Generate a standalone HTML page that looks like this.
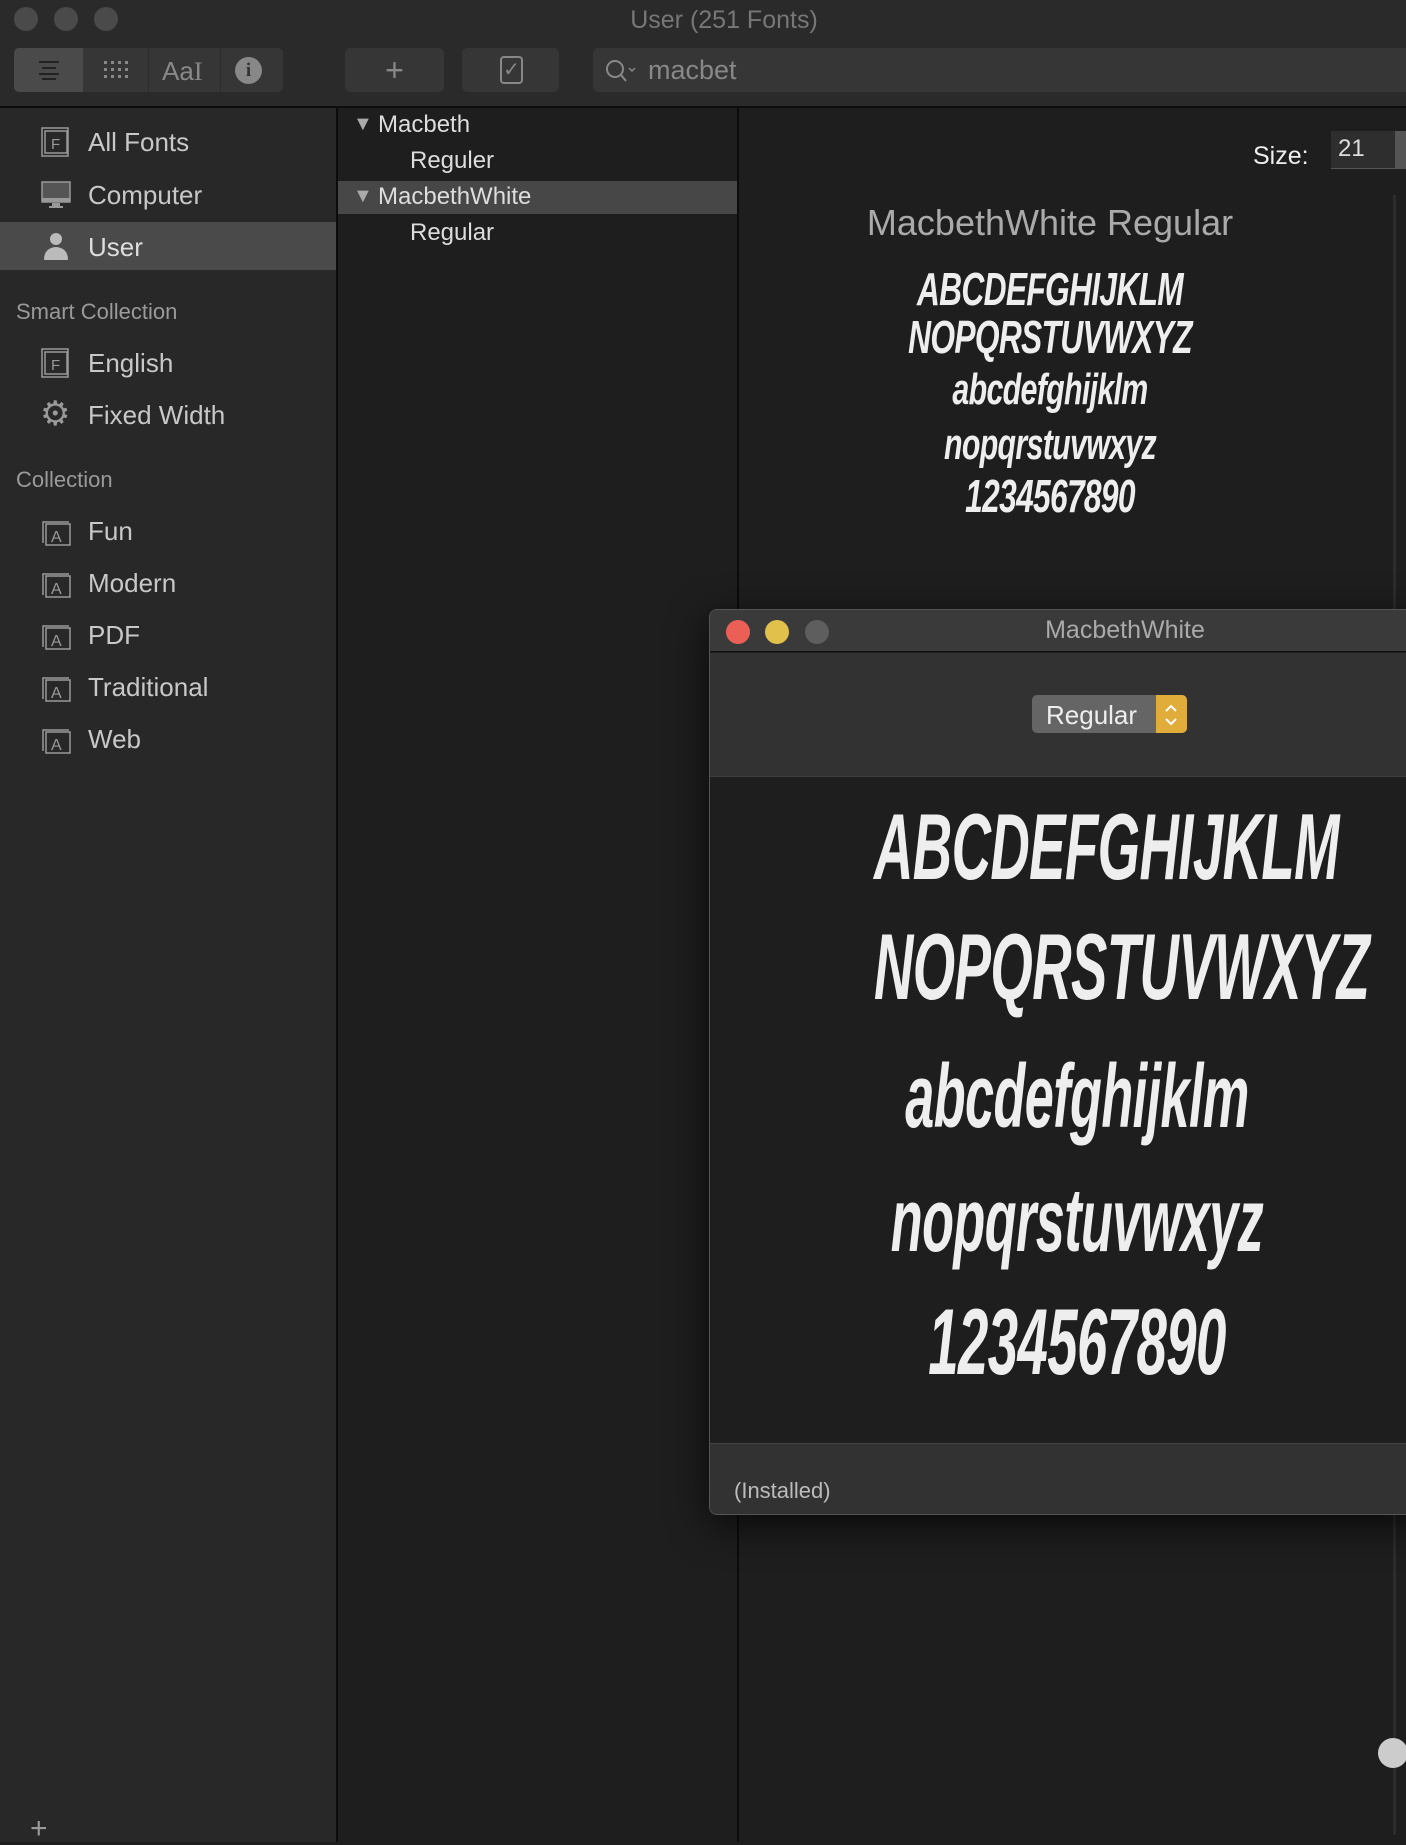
<!DOCTYPE html>
<html><head><meta charset="utf-8"><style>
*{margin:0;padding:0;box-sizing:border-box}
body{width:1406px;height:1842px;background:#1e1e1e;font-family:"Liberation Sans",sans-serif;position:relative;overflow:hidden}
.a{position:absolute}
.t{position:absolute;white-space:nowrap;line-height:1}
.side{left:0;top:108px;width:336px;height:1734px;background:#282828}
.si{font-size:26px;color:#c8c8c8;left:88px}
.hd{font-size:22px;color:#9a9a9a;left:16px}
.ic{position:absolute;left:40px;width:32px;height:32px}
.sample{position:absolute;color:#eee;font-family:"Liberation Sans Narrow","Liberation Sans",sans-serif;font-style:italic;font-weight:bold;white-space:nowrap;text-align:center;transform-origin:center;letter-spacing:-1px}
</style></head><body>
<div class="a" style="left:0;top:0;width:1406px;height:107px;background:#2a2a2a"></div>
<div class="a" style="left:0;top:106px;width:1406px;height:2px;background:#0c0c0c"></div>
<div class="a" style="left:14px;top:7px;width:24px;height:24px;border-radius:50%;background:#4a4a4a"></div>
<div class="a" style="left:54px;top:7px;width:24px;height:24px;border-radius:50%;background:#4a4a4a"></div>
<div class="a" style="left:94px;top:7px;width:24px;height:24px;border-radius:50%;background:#4a4a4a"></div>
<div class="t" style="left:0;width:1448px;text-align:center;top:8px;font-size:25px;color:#777">User (251 Fonts)</div>
<div class="a" style="left:14px;top:48px;width:269px;height:44px;background:#363636;border-radius:5px"></div>
<div class="a" style="left:14px;top:48px;width:69px;height:44px;background:#4a4a4a;border-radius:5px 0 0 5px"></div>
<div class="a" style="left:148px;top:48px;width:1px;height:44px;background:#2c2c2c"></div>
<div class="a" style="left:220px;top:48px;width:1px;height:44px;background:#2c2c2c"></div>
<svg class="a" style="left:37px;top:58px" width="24" height="24"><g stroke="#222" stroke-width="2"><line x1="2" y1="4" x2="22" y2="4"/><line x1="5" y1="10" x2="19" y2="10"/><line x1="2" y1="16" x2="22" y2="16"/><line x1="5" y1="21" x2="19" y2="21"/></g></svg>
<svg class="a" style="left:103px;top:60px" width="26" height="20"><g fill="#888"><rect x="1" y="1" width="3" height="3"/><rect x="8" y="1" width="3" height="3"/><rect x="15" y="1" width="3" height="3"/><rect x="22" y="1" width="3" height="3"/><rect x="1" y="8" width="3" height="3"/><rect x="8" y="8" width="3" height="3"/><rect x="15" y="8" width="3" height="3"/><rect x="22" y="8" width="3" height="3"/><rect x="1" y="15" width="3" height="3"/><rect x="8" y="15" width="3" height="3"/><rect x="15" y="15" width="3" height="3"/><rect x="22" y="15" width="3" height="3"/></g></svg>
<div class="t" style="left:162px;top:58px;font-size:26px;color:#888">Aa<span style="font-family:'Liberation Serif',serif">I</span></div>
<div class="a" style="left:235px;top:57px;width:27px;height:27px;border-radius:50%;background:#888;color:#333;font:bold 19px 'Liberation Serif',serif;text-align:center;line-height:27px">i</div>
<div class="a" style="left:345px;top:48px;width:99px;height:44px;background:#363636;border-radius:5px"></div>
<div class="t" style="left:345px;width:99px;text-align:center;top:54px;font-size:32px;color:#888">+</div>
<div class="a" style="left:462px;top:48px;width:97px;height:44px;background:#363636;border-radius:5px"></div>
<div class="a" style="left:500px;top:56px;width:23px;height:28px;border:2px solid #888;border-radius:4px;color:#888;font-size:20px;text-align:center;line-height:24px">✓</div>
<div class="a" style="left:593px;top:48px;width:830px;height:44px;background:#363636;border-radius:5px"></div>
<svg class="a" style="left:605px;top:59px" width="36" height="24"><circle cx="10" cy="10" r="8" stroke="#888" stroke-width="2" fill="none"/><line x1="16" y1="16" x2="21" y2="22" stroke="#888" stroke-width="2"/><path d="M24 9l3 3 3-3" stroke="#888" stroke-width="1.5" fill="none"/></svg>
<div class="t" style="left:648px;top:57px;font-size:27px;color:#888">macbet</div>
<div class="a side"></div>
<div class="a" style="left:336px;top:108px;width:2px;height:1734px;background:#0c0c0c"></div>
<div class="a" style="left:737px;top:108px;width:2px;height:1734px;background:#0c0c0c"></div>
<div class="a" style="left:0;top:222px;width:336px;height:48px;background:#4a4a4a"></div>
<svg class="ic" style="top:126px"><rect x="2" y="2" width="26" height="28" fill="none" stroke="#999" stroke-width="1.5"/><rect x="5" y="5" width="22" height="22" fill="none" stroke="#999" stroke-width="1.5"/><text x="11" y="23" font-size="15" fill="#999" font-family="Liberation Sans">F</text></svg>
<div class="t si" style="top:129px">All Fonts</div>
<svg class="ic" style="top:180px"><rect x="2" y="2" width="28" height="20" fill="#555" stroke="#999" stroke-width="1.5"/><rect x="2" y="18" width="28" height="4" fill="#999"/><rect x="12" y="23" width="8" height="3" fill="#999"/><rect x="9" y="26" width="14" height="2" fill="#999"/></svg>
<div class="t si" style="top:182px">Computer</div>
<svg class="ic" style="top:230px"><circle cx="16" cy="9" r="6" fill="#bbb"/><path d="M4 30 Q4 18 16 17 Q28 18 28 30Z" fill="#bbb"/></svg>
<div class="t si" style="top:234px;color:#ddd">User</div>
<div class="t hd" style="top:301px">Smart Collection</div>
<svg class="ic" style="top:347px"><rect x="2" y="2" width="26" height="28" fill="none" stroke="#999" stroke-width="1.5"/><rect x="5" y="5" width="22" height="22" fill="none" stroke="#999" stroke-width="1.5"/><text x="11" y="23" font-size="15" fill="#999" font-family="Liberation Sans">F</text></svg>
<div class="t si" style="top:350px">English</div>
<div class="t" style="left:40px;top:397px;font-size:34px;color:#999">⚙</div>
<div class="t si" style="top:402px">Fixed Width</div>
<div class="t hd" style="top:469px">Collection</div>
<div class="t si" style="top:518px">Fun</div>
<div class="t si" style="top:570px">Modern</div>
<div class="t si" style="top:622px">PDF</div>
<div class="t si" style="top:674px">Traditional</div>
<div class="t si" style="top:726px">Web</div>
<svg class="ic" style="top:515px"><path d="M3 28V7h26" fill="none" stroke="#999" stroke-width="1.5"/><rect x="6" y="9" width="24" height="21" fill="none" stroke="#999" stroke-width="1.5"/><text x="11" y="27" font-size="16" fill="#999" font-family="Liberation Sans">A</text></svg>
<svg class="ic" style="top:567px"><path d="M3 28V7h26" fill="none" stroke="#999" stroke-width="1.5"/><rect x="6" y="9" width="24" height="21" fill="none" stroke="#999" stroke-width="1.5"/><text x="11" y="27" font-size="16" fill="#999" font-family="Liberation Sans">A</text></svg>
<svg class="ic" style="top:619px"><path d="M3 28V7h26" fill="none" stroke="#999" stroke-width="1.5"/><rect x="6" y="9" width="24" height="21" fill="none" stroke="#999" stroke-width="1.5"/><text x="11" y="27" font-size="16" fill="#999" font-family="Liberation Sans">A</text></svg>
<svg class="ic" style="top:671px"><path d="M3 28V7h26" fill="none" stroke="#999" stroke-width="1.5"/><rect x="6" y="9" width="24" height="21" fill="none" stroke="#999" stroke-width="1.5"/><text x="11" y="27" font-size="16" fill="#999" font-family="Liberation Sans">A</text></svg>
<svg class="ic" style="top:723px"><path d="M3 28V7h26" fill="none" stroke="#999" stroke-width="1.5"/><rect x="6" y="9" width="24" height="21" fill="none" stroke="#999" stroke-width="1.5"/><text x="11" y="27" font-size="16" fill="#999" font-family="Liberation Sans">A</text></svg>
<div class="t" style="left:30px;top:1814px;font-size:30px;color:#999">+</div>
<div class="a" style="left:338px;top:181px;width:399px;height:33px;background:#474747"></div>
<div class="t" style="left:353px;top:114px;font-size:20px;color:#aaa">▼</div>
<div class="t" style="left:378px;top:113px;font-size:24px;color:#ddd">Macbeth</div>
<div class="t" style="left:410px;top:149px;font-size:24px;color:#ddd">Reguler</div>
<div class="t" style="left:353px;top:186px;font-size:20px;color:#aaa">▼</div>
<div class="t" style="left:378px;top:185px;font-size:24px;color:#ddd">MacbethWhite</div>
<div class="t" style="left:410px;top:221px;font-size:24px;color:#ddd">Regular</div>
<div class="t" style="left:1253px;top:144px;font-size:25px;color:#eee">Size:</div>
<div class="a" style="left:1331px;top:131px;width:80px;height:38px;background:#2e2e2e;border-bottom:1px solid #555"></div>
<div class="t" style="left:1338px;top:137px;font-size:24px;color:#ddd">21</div>
<div class="a" style="left:1395px;top:131px;width:11px;height:38px;background:#555"></div>
<div class="a" style="left:1393px;top:195px;width:3px;height:1640px;background:#2c2c2c"></div>
<div class="t" style="left:740px;width:620px;text-align:center;top:205px;font-size:36px;color:#aaa">MacbethWhite Regular</div>
<div class="sample" style="left:800px;width:500px;top:262px;font-size:46px;transform:scaleX(.69)">ABCDEFGHIJKLM</div>
<div class="sample" style="left:800px;width:500px;top:310px;font-size:46px;transform:scaleX(.69)">NOPQRSTUVWXYZ</div>
<div class="sample" style="left:800px;width:500px;top:365px;font-size:44px;transform:scaleX(.69)">abcdefghijklm</div>
<div class="sample" style="left:800px;width:500px;top:420px;font-size:44px;transform:scaleX(.69)">nopqrstuvwxyz</div>
<div class="sample" style="left:800px;width:500px;top:469px;font-size:46px;transform:scaleX(.69)">1234567890</div>
<div class="a" style="left:1378px;top:1738px;width:30px;height:30px;border-radius:50%;background:#ccc"></div>
<div class="a" style="left:709px;top:609px;width:720px;height:906px;background:#1e1e1e;border:1px solid #555;border-radius:8px;box-shadow:0 10px 40px rgba(0,0,0,.7);overflow:hidden">
<div class="a" style="left:0;top:0;width:720px;height:42px;background:#3a3a3a;border-bottom:1px solid #111"></div>
<div class="a" style="left:16px;top:10px;width:24px;height:24px;border-radius:50%;background:#ec5f57"></div>
<div class="a" style="left:55px;top:10px;width:24px;height:24px;border-radius:50%;background:#e1c04b"></div>
<div class="a" style="left:95px;top:10px;width:24px;height:24px;border-radius:50%;background:#5e5e5e"></div>
<div class="t" style="left:0;width:830px;text-align:center;top:8px;font-size:25px;color:#aaa">MacbethWhite</div>
<div class="a" style="left:0;top:43px;width:720px;height:124px;background:#323232;border-bottom:1px solid #3e3e3e"></div>
<div class="a" style="left:322px;top:85px;width:155px;height:38px;background:#656565;border-radius:5px;overflow:hidden"><div class="a" style="left:124px;top:0;width:31px;height:38px;background:#e0ad3a"></div></div>
<div class="t" style="left:336px;top:92px;font-size:26px;color:#eee">Regular</div>
<svg class="a" style="left:452px;top:92px" width="18" height="26"><path d="M4 9l5-5 5 5M4 17l5 5 5-5" stroke="#fff" stroke-width="2" fill="none"/></svg>
<div class="sample" style="left:17px;width:700px;top:183px;font-size:94px;transform:scaleX(.58)">ABCDEFGHIJKLM</div>
<div class="sample" style="left:17px;width:700px;top:303px;font-size:94px;transform:scaleX(.58)">NOPQRSTUVWXYZ</div>
<div class="sample" style="left:17px;width:700px;top:436px;font-size:90px;transform:scaleX(.58)">abcdefghijklm</div>
<div class="sample" style="left:17px;width:700px;top:560px;font-size:90px;transform:scaleX(.58)">nopqrstuvwxyz</div>
<div class="sample" style="left:17px;width:700px;top:678px;font-size:94px;transform:scaleX(.58)">1234567890</div>
<div class="a" style="left:0;top:833px;width:720px;height:73px;background:#323232;border-top:1px solid #444"></div>
<div class="t" style="left:24px;top:870px;font-size:22px;color:#bbb">(Installed)</div>
</div>
</body></html>
